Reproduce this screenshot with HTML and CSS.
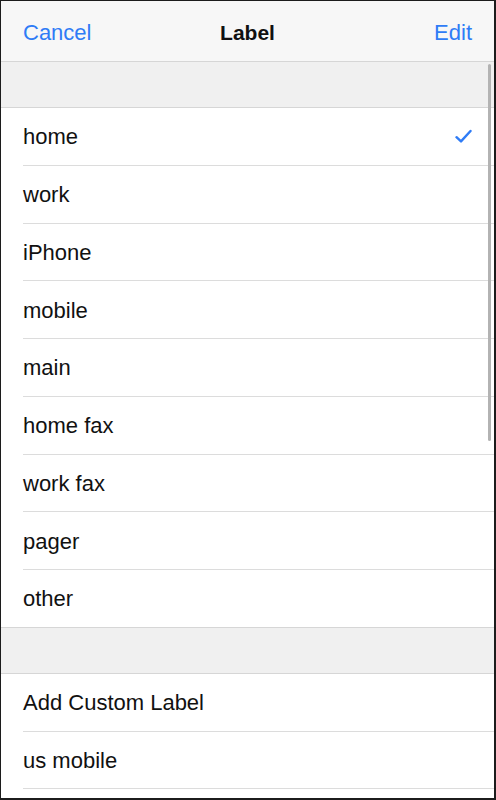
FILE: index.html
```html
<!DOCTYPE html>
<html lang="en">
    <head>
        <meta charset="UTF-8">
        <meta name="viewport" content="width=device-width, initial-scale=1.0">
        <title>Label</title>
        <link rel="stylesheet" href="styles.css">
    </head>
    <body>
        <div class="screen">
            <div class="navbar">
                <span class="nav-btn">Cancel</span>
                <span class="nav-title">Label</span>
                <span class="nav-btn">Edit</span>
            </div>
            <div class="section-gap"></div>
            <div class="group">
                <div class="row"><div class="row-inner">home
                    <svg class="check" width="17" height="15" viewBox="0 0 17 15"><path d="M1.5 8.2 L6 12.4 L15.5 2" fill="none" stroke="#2f7cf6" stroke-width="2.4" stroke-linecap="round" stroke-linejoin="round"/></svg>
                </div></div>
                <div class="row"><div class="row-inner">work</div></div>
                <div class="row"><div class="row-inner">iPhone</div></div>
                <div class="row"><div class="row-inner">mobile</div></div>
                <div class="row"><div class="row-inner">main</div></div>
                <div class="row"><div class="row-inner">home fax</div></div>
                <div class="row"><div class="row-inner">work fax</div></div>
                <div class="row"><div class="row-inner">pager</div></div>
                <div class="row last"><div class="row-inner">other</div></div>
            </div>
            <div class="section-gap"></div>
            <div class="group">
                <div class="row"><div class="row-inner">Add Custom Label</div></div>
                <div class="row"><div class="row-inner">us mobile</div></div>
            </div>
            <div class="scrollbar"></div>
        </div>
    </body>
</html>
```

FILE: styles.css
```css
body {
    margin: 0;
    background: #fff;
    font-family: "Liberation Sans", Arial, sans-serif;
}

.screen {
    position: relative;
    width: 496px;
    height: 800px;
    box-sizing: border-box;
    border-top: 1px solid #1c1c1c;
    border-left: 1px solid #1c1c1c;
    border-right: 2px solid #1c1c1c;
    border-bottom: 2px solid #1c1c1c;
    overflow: hidden;
    background: #fff;
}

.navbar {
    height: 61px;
    box-sizing: border-box;
    padding: 3px 22px 0;
    background: #f7f7f7;
    border-bottom: 1px solid #d6d6d6;
    display: flex;
    align-items: center;
    justify-content: space-between;
    position: relative;
}

.nav-btn {
    color: #2f7cf6;
    font-size: 22px;
}

.nav-title {
    position: absolute;
    left: 0;
    right: 0;
    text-align: center;
    font-size: 21px;
    font-weight: bold;
    color: #111;
    pointer-events: none;
}

.section-gap {
    height: 45px;
    background: #f0f0f0;
    border-bottom: 1px solid #d6d6d6;
}

.row {
    padding-left: 22px;
    background: #fff;
}

.row-inner {
    height: 54.75px;
    border-bottom: 1px solid #dcdcdc;
    display: flex;
    align-items: center;
    justify-content: space-between;
    padding: 2px 22px 0 0;
    font-size: 22px;
    color: #111;
}

.row.last {
    padding-left: 0;
    border-bottom: 1px solid #d6d6d6;
}

.row.last .row-inner {
    border-bottom: none;
    padding-left: 22px;
}

.check {
    display: block;
    margin-top: -2px;
}

.scrollbar {
    position: absolute;
    left: 487px;
    top: 63px;
    width: 3px;
    height: 377px;
    background: #b3b3b3;
    border-radius: 2px;
}
```
